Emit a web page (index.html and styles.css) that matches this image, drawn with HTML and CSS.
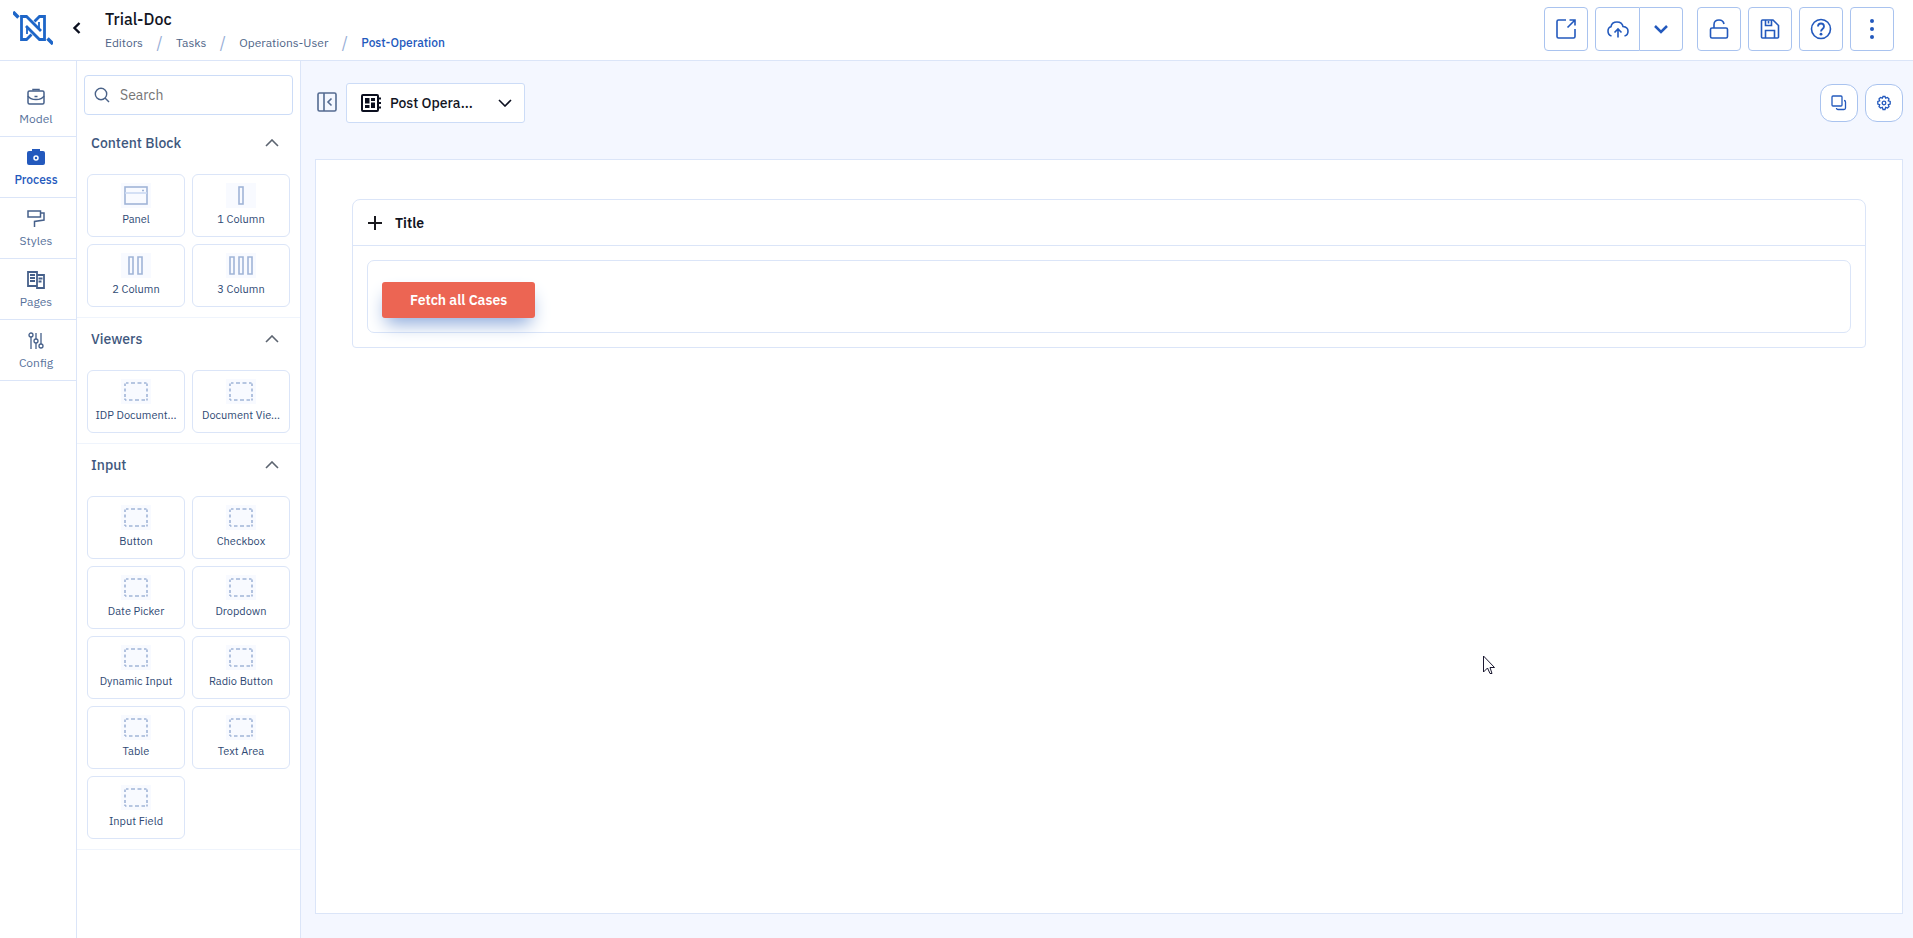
FILE: index.html
```html
<!DOCTYPE html>
<html lang="en">
<head>
<meta charset="utf-8">
<title>Trial-Doc</title>
<link rel="stylesheet" href="styles.css">
</head>
<body>
<svg class="sprite" aria-hidden="true">
  <symbol id="box" viewBox="0 0 30 25"><path d="M0 0h30v25H0z" fill="#f8faff" stroke="none"/><path d="M5 4h2.500M10 4h4M16.500 4h4M23 4h2.500M4 21h1.500M8 21h3.500M14 21h4M20.500 21h3.500M4 4.500v2.500M4 9.500v3M4 15v3M4 19.500v1.500M26 4.500v2.500M26 9.500v3M26 15v3M26 19.500v2"/></symbol>
  <symbol id="up" viewBox="0 0 14 8"><path d="M1 7l6-6 6 6" fill="none" stroke="#5c6470" stroke-width="1.600"/></symbol>
</svg>
<header class="topbar">
  <svg class="logo" viewBox="0 0 40 34" role="img" aria-label="Logo"><g fill="none" stroke="#1e66c8" stroke-width="2.800"><path d="M18.500 23.500L13.500 28.500H8.500V5.500H13.500L28 20"/><path d="M21.500 10.500L26.500 5.500H31.500V28.500H26.500L13 15"/><path d="M14 15v8M26 11v8" stroke-width="1.800"/><path d="M0 1l5.500 5.500M34.500 27.500l5.500 5.500" stroke-width="3.500"/></g></svg>
  <button class="back" aria-label="Back"><svg width="10" height="12" viewBox="0 0 10 12"><path d="M7.500 1L2.500 6l5 5" fill="none" stroke="#0b0f1f" stroke-width="2.400"/></svg></button>
  <div class="heading">
    <h1>Trial-Doc</h1>
    <nav class="crumbs" aria-label="Breadcrumb"><a href="#">Editors</a><i>/</i><a href="#">Tasks</a><i>/</i><a href="#">Operations-User</a><i>/</i><a href="#" class="current">Post-Operation</a></nav>
  </div>
  <div class="actions">
    <button aria-label="Open"><svg width="22" height="22" viewBox="0 0 22 22"><path d="M11 2H3.500Q2 2 2 3.500v15Q2 20 3.500 20h15q1.500 0 1.500-1.500V11M12.500 9.500L20 2M14.500 2H20v5.500"/></svg></button>
    <div class="split">
      <button aria-label="Publish"><svg width="22" height="22" viewBox="0 0 22 22"><path d="M4.500 18C2.500 17.500 1 15.500 1 13c0-2.500 1.500-4 3-4.300C4.500 5.500 7 4 10 4c3.500 0 5.500 2 6 4.500 3 .3 5 2 5 4.700 0 2.500-1.500 4.300-3.500 4.800M11 19.500v-8M7.500 14.500L11 11l3.500 3.500"/></svg></button>
      <button aria-label="More publish options"><svg width="22" height="22" viewBox="0 0 22 22"><path d="M5 8l6 6 6-6" stroke-width="2.500"/></svg></button>
    </div>
    <button aria-label="Unlock"><svg width="22" height="22" viewBox="0 0 22 22"><rect x="2.500" y="10" width="17" height="10" rx="1.500"/><path d="M6 10V6.500C6 3.500 8 2 11 2c2.500 0 4.500 1.500 5 4"/></svg></button>
    <button aria-label="Save"><svg width="22" height="22" viewBox="0 0 22 22"><path d="M3.500 2H14l5.500 5.500V19q0 1-1 1h-15q-1 0-1-1V3q0-1 1-1zM6.500 2v5.500h6V2M9.500 3v2.500M6.500 20v-7.500h9V20"/></svg></button>
    <button aria-label="Help"><svg width="22" height="22" viewBox="0 0 22 22"><circle cx="11" cy="11" r="9.500"/><path d="M8 8.500C8 6.500 9.500 5.500 11 5.500s3 1 3 3c0 2.500-3 2.500-3 5" stroke-width="1.800"/><circle class="solid" cx="11" cy="16.200" r="1.400"/></svg></button>
    <button aria-label="More"><svg width="22" height="22" viewBox="0 0 22 22"><g class="solid"><circle cx="11" cy="3" r="2"/><circle cx="11" cy="11" r="2"/><circle cx="11" cy="19" r="2"/></g></svg></button>
  </div>
</header>
<div class="shell">
  <nav class="rail">
    <a href="#"><svg viewBox="0 0 20 20"><rect x="2" y="4" width="16" height="13" rx="1.500"/><path d="M7 3.500V2.500h6v1M2 9q2 3.500 8 3.500T18 9M8.500 9.500h3"/></svg>Model</a>
    <a href="#" class="active"><svg viewBox="0 0 20 20"><path class="solid" d="M6 3V1h8v2h3q2 0 2 2v10q0 2-2 2H3q-2 0-2-2V5q0-2 2-2z"/><circle cx="10" cy="10" r="2" stroke="#fff"/></svg>Process</a>
    <a href="#"><svg viewBox="0 0 20 20"><path d="M2 2h12.500v6H2zM14.500 4H18v7l-9.500 1.500V18"/></svg>Styles</a>
    <a href="#"><svg viewBox="0 0 20 20"><path d="M11 16H2V2h9v3M11 5h7v13h-7zM4 5h5M4 8h5M4 11h5M12.500 8.500h4M12.500 11.500h3" stroke-width="1.800"/></svg>Pages</a>
    <a href="#"><svg viewBox="0 0 20 20"><g stroke-width="1.300"><path d="M5 6v12M10 2v6M10 12v6M15 2v11"/><circle cx="5" cy="4" r="2"/><circle cx="10" cy="10" r="2"/><circle cx="15" cy="15" r="2"/></g></svg>Config</a>
  </nav>
  <aside class="palette">
    <label class="search"><svg width="16" height="16" viewBox="0 0 16 16"><circle cx="7" cy="7" r="5.700"/><path d="M11 11l4 4"/></svg><input type="search" placeholder="Search" aria-label="Search"></label>
    <section>
      <h2>Content Block<svg width="14" height="8"><use href="#up"/></svg></h2>
      <div class="tiles">
        <button><svg viewBox="0 0 30 25"><path d="M0 0h30v25H0z" fill="#f8faff" stroke="none"/><rect x="4" y="4" width="22" height="17"/><path d="M4 10h22" stroke="#cbdaf3"/><path d="M21 7.500h2"/></svg><span>Panel</span></button>
        <button><svg viewBox="0 0 30 25"><path d="M0 0h30v25H0z" fill="#f8faff" stroke="none"/><rect x="13" y="4" width="4" height="17"/></svg><span>1 Column</span></button>
        <button><svg viewBox="0 0 30 25"><path d="M0 0h30v25H0z" fill="#f8faff" stroke="none"/><path d="M8 4h4v17H8zM17 4h4v17h-4z"/></svg><span>2 Column</span></button>
        <button><svg viewBox="0 0 30 25"><path d="M0 0h30v25H0z" fill="#f8faff" stroke="none"/><path d="M4 4h4v17H4zM13 4h4v17h-4zM22 4h4v17h-4z"/></svg><span>3 Column</span></button>
      </div>
    </section>
    <section>
      <h2>Viewers<svg width="14" height="8"><use href="#up"/></svg></h2>
      <div class="tiles">
        <button><svg><use href="#box"/></svg><span>IDP Document...</span></button>
        <button><svg><use href="#box"/></svg><span>Document Vie...</span></button>
      </div>
    </section>
    <section>
      <h2>Input<svg width="14" height="8"><use href="#up"/></svg></h2>
      <div class="tiles">
        <button><svg><use href="#box"/></svg><span>Button</span></button>
        <button><svg><use href="#box"/></svg><span>Checkbox</span></button>
        <button><svg><use href="#box"/></svg><span>Date Picker</span></button>
        <button><svg><use href="#box"/></svg><span>Dropdown</span></button>
        <button><svg><use href="#box"/></svg><span>Dynamic Input</span></button>
        <button><svg><use href="#box"/></svg><span>Radio Button</span></button>
        <button><svg><use href="#box"/></svg><span>Table</span></button>
        <button><svg><use href="#box"/></svg><span>Text Area</span></button>
        <button><svg><use href="#box"/></svg><span>Input Field</span></button>
      </div>
    </section>
  </aside>
  <main>
    <div class="toolbar">
      <button class="collapse" aria-label="Collapse panel"><svg width="20" height="20" viewBox="0 0 20 20"><rect x="1" y="1" width="18" height="18" rx="1.500"/><path d="M7 1v18M14.500 6.500L11 10l3.500 3.500"/></svg></button>
      <button class="picker"><svg width="20" height="20" viewBox="0 0 20 20"><rect x="1" y="2" width="16" height="16" rx="1" fill="none" stroke="#0b0f1f" stroke-width="2"/><path fill="#0b0f1f" d="M4 5h4.500v5.500H4zM10 5h4v3h-4zM4 12h4.500v3H4zM10 9.500h4V15h-4zM18 4.500h2v2h-2zM18 9h2v2h-2zM18 13.500h2v2h-2z"/></svg><span>Post Opera...</span><svg width="14" height="8" viewBox="0 0 14 8"><path d="M1 1l6 6 6-6" fill="none" stroke="#0b0f1f" stroke-width="1.600"/></svg></button>
      <div class="tools">
        <button aria-label="Duplicate"><svg width="16" height="16" viewBox="0 0 16 16"><rect x="1" y="1" width="10" height="10" rx="1"/><path d="M13 5.500q1.500 0 1.500 1.500v6q0 1.500-1.500 1.500H7q-1.500 0-1.500-1.500"/></svg></button>
        <button aria-label="Settings"><svg width="16" height="16" viewBox="0 0 16 16"><path d="M7 1.500h2l.7 1.700 1.800-.7 1.500 1.500-.7 1.800 1.900.7v2.500l-1.900.7.700 1.800-1.500 1.500-1.800-.7L9 14.500H7l-.7-2.200-1.800.7L3 11.500l.7-1.800L1.800 9V6.500l1.900-.7L3 4l1.500-1.500 1.800.7z"/><circle cx="8" cy="8" r="1.800"/></svg></button>
      </div>
    </div>
    <div class="canvas">
      <section class="panel">
        <h3><svg width="16" height="16" viewBox="0 0 16 16"><path d="M8 1v14M1 8h14" stroke="#1a1a1f" stroke-width="2"/></svg>Title</h3>
        <div class="panel-body"><div class="column"><button class="primary">Fetch all Cases</button></div></div>
      </section>
    </div>
  </main>
</div>
<svg class="cursor" width="12" height="20" viewBox="0 0 12 20" aria-hidden="true"><path d="M.5 1v16l4-4 2.500 5.500h2L7 12.500h4.500z" fill="#fff" stroke="#1a1830"/></svg>
</body>
</html>
```
FILE: styles.css
```css
* { box-sizing: border-box; }
body {
  margin: 0;
  min-height: 100vh;
  display: flex;
  flex-direction: column;
  font-family: "IBM Plex Sans", "Noto Sans", sans-serif;
  color: #12151f;
  background: #fff;
}
button { font: inherit; color: inherit; background: #fff; border: 0; padding: 0; cursor: pointer; }
a { color: inherit; text-decoration: none; }
h1, h2, h3 { margin: 0; font-weight: 500; }
.sprite { position: absolute; width: 0; height: 0; }

.topbar { display: flex; align-items: center; height: 61px; padding: 0 19px 0 13px; border-bottom: 1px solid #dbe5f8; }
.logo { width: 40px; height: 34px; margin-bottom: 5px; }
.back { display: flex; margin: 0 23px 4px 19px; }
.heading { flex: 1; padding-top: 2px; }
.heading h1 { font-size: 16px; line-height: 24px; }
.crumbs { display: flex; font-size: 12px; line-height: 24px; color: #4f6588; }
.crumbs i { width: 33px; text-align: center; font-size: 16px; font-style: normal; color: #97add6; }
.crumbs .current { color: #2359bd; font-weight: 500; }
.actions { display: flex; gap: 7px; margin-bottom: 2px; }
.actions button { width: 44px; height: 44px; display: grid; place-items: center; border: 1px solid #a9c3ef; border-radius: 4px; }
.actions svg { fill: none; stroke: #2359bd; stroke-width: 1.6; }
.actions .solid, .rail .solid { fill: #2359bd; stroke: none; }
.split { display: flex; margin-right: 7px; }
.split button:first-child { width: 45px; border-radius: 4px 0 0 4px; }
.split button:last-child { width: 43px; border-left: 0; border-radius: 0 4px 4px 0; }

.shell { flex: 1; display: flex; }
.rail { width: 77px; padding-top: 15px; border-right: 1px solid #dbe5f8; }
.rail a { display: flex; flex-direction: column; align-items: center; height: 61px; padding: 11px 4px 0 0; border-bottom: 1px solid #dbe5f8; font-size: 12px; line-height: 20px; color: #58729b; }
.rail svg { width: 20px; height: 20px; margin-bottom: 2px; fill: none; stroke: #46608a; stroke-width: 1.5; }
.rail .active { color: #2359bd; font-weight: 500; }

.palette { width: 224px; padding-top: 14px; border-right: 1px solid #dbe5f8; }
.search { display: flex; align-items: center; gap: 10px; height: 40px; margin: 0 7px 7px; padding: 0 9px; border: 1px solid #ccdcf7; border-radius: 4px; }
.search svg { flex: none; fill: none; stroke: #4a6288; stroke-width: 1.4; }
.search input { width: 100%; padding: 0; border: 0; outline: 0; font: inherit; font-size: 14px; color: #4a6288; }
.search input::placeholder { color: #757575; }
.palette section { padding-bottom: 10px; border-bottom: 1px solid #eff4fc; }
.palette h2 { display: flex; align-items: center; justify-content: space-between; height: 52px; padding: 0 21px 10px 14px; font-size: 14px; color: #3f587e; }
.tiles { display: grid; grid-template-columns: 98px 98px; gap: 7px; padding-left: 10px; }
.tiles button { display: flex; flex-direction: column; align-items: center; height: 63px; padding: 8px 4px 0; border: 1px solid #dbe5f8; border-radius: 6px; font-size: 11px; line-height: 22px; color: #2f4a74; }
.tiles svg { width: 30px; height: 25px; fill: none; stroke: #a0b5d8; stroke-width: 1.6; }
.tiles span { white-space: nowrap; }

main { flex: 1; display: flex; flex-direction: column; padding: 22px 10px 24px 14px; background: #f4f7ff; }
.toolbar { display: flex; align-items: center; height: 40px; margin-bottom: 36px; }
.collapse { display: flex; margin: 0 9px 2px 2px; background: none; }
.collapse svg { fill: none; stroke: #546b91; stroke-width: 1.6; }
.picker { display: flex; align-items: center; gap: 9px; width: 179px; height: 40px; padding: 0 12px 0 14px; border: 1px solid #ccdcf7; border-radius: 3px; font-size: 14px; font-weight: 500; }
.picker span { margin-right: auto; white-space: nowrap; }
.tools { display: flex; gap: 7px; margin-left: auto; }
.tools button { width: 38px; height: 38px; display: grid; place-items: center; border: 1px solid #a9c3ef; border-radius: 12px; }
.tools svg { fill: none; stroke: #2359bd; stroke-width: 1.3; }

.canvas { flex: 1; padding: 39px 36px; border: 1px solid #dbe5f8; background: #fff; }
.panel { border: 1px solid #dbe5f8; border-radius: 8px 8px 4px 4px; }
.panel h3 { display: flex; align-items: center; gap: 12px; height: 46px; padding: 0 14px; border-bottom: 1px solid #dbe5f8; font-size: 14px; font-weight: 600; }
.panel-body { padding: 14px; }
.column { display: flex; height: 73px; padding: 21px 14px; border: 1px solid #dbe5f8; border-radius: 7px; }
.primary { height: 36px; padding: 0 28px; border-radius: 3px; background: #ec6553; color: #fff; font-size: 14px; font-weight: 600; box-shadow: 0 10px 18px -4px #8eabdc; }
.cursor { position: absolute; left: 1483px; top: 655px; pointer-events: none; }
```
